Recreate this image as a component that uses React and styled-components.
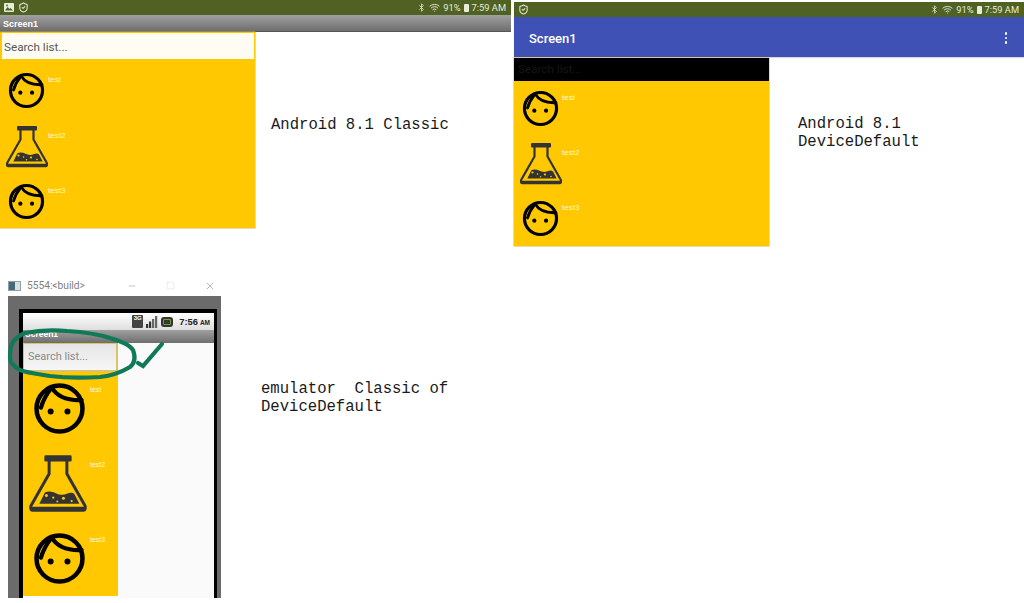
import React from 'react';
import styled, { createGlobalStyle } from 'styled-components';
import { Bluetooth, Wifi, ShieldCheck, Minus, Square, X } from 'lucide-react';

const GlobalStyle = createGlobalStyle`
  html, body { margin: 0; padding: 0; background: #fff; }
  body { font-family: Roboto, "Liberation Sans", sans-serif; overflow: hidden; }
`;

const Page = styled.div`
  width: 1024px;
  height: 603px;
  display: flex;
  flex-direction: column;
  overflow: hidden;
`;

const TopRow = styled.div`
  height: 278px;
  display: flex;
  gap: 3px;
`;

const BottomRow = styled.div`
  display: flex;
  padding-left: 8px;
`;

const Device = styled.section`
  display: flex;
  flex-direction: column;
  width: ${(p) => p.$width}px;
  margin-top: ${(p) => p.$top || 0}px;
`;

const StatusBar = styled.div`
  height: 15px;
  flex: none;
  background: #4f6223;
  color: #e8ecd8;
  display: flex;
  align-items: center;
  padding: 0 5px 0 4px;
  gap: 4px;
  font-size: 9.3px;
`;

const StatusRight = styled.div`
  margin-left: auto;
  display: flex;
  align-items: center;
  gap: 3px;
`;

const Battery = styled.span`
  width: 5px;
  height: 8px;
  background: #e8ecd8;
  border-radius: 1px;
`;

const ClassicTitle = styled.div`
  height: 17px;
  flex: none;
  box-sizing: border-box;
  background: linear-gradient(#a0a0a0, #6e6e6e);
  border-bottom: 1px solid #555;
  color: #fff;
  font: bold 9px/19px "Liberation Sans", sans-serif;
  padding-left: 3px;
`;

const ActionBar = styled.div`
  height: 40px;
  flex: none;
  background: #3f51b5;
  color: #fff;
  display: flex;
  align-items: center;
  justify-content: space-between;
  padding: 2px 17px 0 15px;
  box-sizing: border-box;
  font-size: 13px;
  font-weight: 500;
  box-shadow: 0 1px 1px #d8d8e4;
`;

const MenuDots = styled.span`
  display: flex;
  flex-direction: column;
  gap: 2px;
  i {
    width: 2.5px;
    height: 2.5px;
    border-radius: 50%;
    background: #fff;
  }
`;

const Content = styled.div`
  display: flex;
  align-items: flex-start;
`;

const ListColumn = styled.div`
  width: 255px;
  flex: none;
  background: #ffc800;
  box-shadow: 0 0 0 0.5px #d8b84a;
  margin-top: ${(p) => p.$top || 0}px;
  padding: ${(p) => p.$pad || '0'};
`;

const SearchBox = styled.div`
  height: 26px;
  margin: 0 1px 0 2px;
  background: #fffdf3;
  color: #555;
  font-size: 11.7px;
  line-height: 29px;
  padding-left: 2px;
`;

const DarkSearchBox = styled.div`
  height: 23px;
  background: #000;
  color: #161616;
  font-size: 11.7px;
  line-height: 23px;
  padding-left: 4px;
`;

const ListItem = styled.div`
  height: ${(p) => p.$height}px;
  box-sizing: border-box;
  position: relative;
  display: flex;
  align-items: flex-start;
  padding: ${(p) => p.$top}px 0 0 ${(p) => p.$pad}px;
`;

const ItemLabel = styled.span`
  position: absolute;
  left: ${(p) => p.$left}px;
  top: ${(p) => p.$top}px;
  color: #fff8d8;
  font: ${(p) => p.$size}px/9px "Liberation Sans", sans-serif;
`;

const Caption = styled.p`
  margin: ${(p) => p.$top}px 0 0 ${(p) => p.$left}px;
  font: 15.6px/18px "Liberation Mono", monospace;
  color: #1a1a1a;
  white-space: pre;
`;

const EmulatorWindow = styled.section`
  width: 213px;
  position: relative;
  flex: none;
`;

const WindowTitle = styled.div`
  height: 18px;
  display: flex;
  align-items: center;
  padding-bottom: 3px;
  box-sizing: border-box;
  color: #808080;
  font-size: 10.2px;
  gap: 6px;
`;

const WindowIcon = styled.span`
  width: 13px;
  height: 10px;
  box-sizing: border-box;
  border: 1px solid #8fa0aa;
  background: linear-gradient(90deg, #48697a 55%, #d8e0e4 55%);
`;

const WindowControls = styled.div`
  margin-left: auto;
  display: flex;
  align-items: center;
  gap: 29px;
  padding-right: 5px;
  color: #777;
`;

const EmulatorFrame = styled.div`
  background: #6b6b6b;
  padding: 13px 4px 0 11px;
  height: 302px;
  box-sizing: border-box;
`;

const Bezel = styled.div`
  background: #000;
  padding: 4px 3px 0 4px;
  height: 100%;
  box-sizing: border-box;
`;

const EmuScreen = styled.div`
  background: #fafafa;
  height: 100%;
  display: flex;
  flex-direction: column;
`;

const EmuStatus = styled.div`
  height: 17px;
  flex: none;
  background: linear-gradient(#fff, #dedede);
  display: flex;
  align-items: center;
  justify-content: flex-end;
  gap: 3px;
  padding-right: 4px;
  color: #222;
  font: bold 9.3px "Liberation Sans", sans-serif;
  small {
    font-size: 6.5px;
    margin-left: 2px;
  }
`;

const EmuClock = styled.span`
  margin-left: 3px;
`;

const NetworkChip = styled.span`
  width: 11px;
  height: 13px;
  background: #444;
  color: #fff;
  border-radius: 1px;
  font: bold 6px/7px "Liberation Sans", sans-serif;
  text-align: center;
`;

const EmuBattery = styled.span`
  width: 12px;
  height: 10px;
  background: #2e3a2a;
  border-radius: 3px;
  border: 2px solid #333;
  box-sizing: border-box;
  box-shadow: inset 0 0 0 1px #7c9a3a;
`;

const EmuTitle = styled.div`
  height: 13px;
  flex: none;
  background: linear-gradient(#a0a0a0, #6e6e6e);
  color: #fff;
  font: bold 8.5px/9px "Liberation Sans", sans-serif;
  padding-left: 2px;
`;

const EmuList = styled.div`
  width: 95px;
  height: 253px;
  background: #ffc800;
`;

const EmuSearch = styled.div`
  height: 29px;
  box-sizing: border-box;
  background: linear-gradient(#e6e6e6, #f6f6f6);
  border: 1px solid #dcc26a;
  border-width: 1px 2px 2px 1px;
  color: #8a8a8a;
  font-size: 11px;
  line-height: 26px;
  padding-left: 4px;
`;

const Annotation = styled.svg`
  position: absolute;
  left: 0;
  top: 50px;
  overflow: visible;
`;

const FaceIcon = ({ size }) => (
  <svg width={size} height={size} viewBox="0 0 24 24" fill="none" stroke="#000" strokeLinecap="round">
    <circle cx="12" cy="12" r="10.4" strokeWidth="2.05" />
    <path d="M8.5 2.5C10.5 6 15 8.5 22 8.2" strokeWidth="1.9" />
    <path d="M8.5 2.5C6.5 5 4.6 8 3.6 11.6" strokeWidth="1.9" />
    <circle cx="8" cy="13.4" r="1.35" fill="#000" stroke="none" />
    <circle cx="15.6" cy="13.4" r="1.35" fill="#000" stroke="none" />
  </svg>
);

const FlaskIcon = ({ size }) => (
  <svg width={size} height={size} viewBox="0 0 44 44" fill="none">
    <rect x="12" y="1" width="20" height="4.5" rx="1" fill="#333" />
    <path
      d="M15.5 5v9.5L2.4 37.5C1.4 39.5 2.2 40.5 3.8 40.5h36.4c1.6 0 2.4-1 1.4-3L28.5 14.5V5"
      stroke="#333"
      strokeWidth="2.2"
      strokeLinejoin="round"
    />
    <path d="M3 40.5h38" stroke="#333" strokeWidth="3.6" strokeLinecap="round" />
    <path d="M12.5 28c3-1 5.5-.5 8 .8s5.5 1.6 8 .4 4.5-.8 5.5.2l3.7 7.1H8.3z" fill="#333" />
    <circle cx="13.5" cy="30.5" r="1.1" fill="#ffc800" />
    <circle cx="18.5" cy="32" r="0.8" fill="#ffc800" />
    <circle cx="26" cy="32.5" r="1.1" fill="#ffc800" />
    <circle cx="21.5" cy="34.8" r="0.7" fill="#ffc800" />
    <circle cx="32" cy="34.5" r="0.8" fill="#ffc800" />
  </svg>
);

const StatusPicture = () => (
  <svg width="10" height="9" viewBox="0 0 10 9">
    <rect width="10" height="9" rx="1" fill="#e8ecd8" />
    <path d="M1 7.5 3.5 4l2 2 1-1 2.5 2.5z" fill="#4f6223" />
    <circle cx="3" cy="2.4" r="0.9" fill="#4f6223" />
  </svg>
);

const SignalBars = () => (
  <svg width="12" height="12" viewBox="0 0 12 12" fill="#333">
    <rect x="0" y="8" width="2.2" height="4" />
    <rect x="3" y="5.5" width="2.2" height="6.5" />
    <rect x="6" y="3" width="2.2" height="9" fill="#666" />
    <rect x="9" y="0" width="2.2" height="12" fill="#666" />
  </svg>
);

const items = [
  { name: 'test', kind: 'face' },
  { name: 'test2', kind: 'flask' },
  { name: 'test3', kind: 'face' },
];

const PhoneList = ({ height, faceTop, flaskTop, labelTop }) =>
  items.map((item) => (
    <ListItem
      key={item.name}
      $height={height}
      $top={item.kind === 'face' ? faceTop : flaskTop}
      $pad={item.kind === 'face' ? 8 : 5}
    >
      {item.kind === 'face' ? <FaceIcon size={37} /> : <FlaskIcon size={44} />}
      <ItemLabel $left={48} $top={labelTop} $size={8}>{item.name}</ItemLabel>
    </ListItem>
  ));

const EmuItems = () =>
  items.map((item) => (
    <ListItem
      key={item.name}
      $height={75}
      $top={item.kind === 'face' ? 9.5 : 7}
      $pad={item.kind === 'face' ? 10 : 5}
    >
      {item.kind === 'face' ? <FaceIcon size={53} /> : <FlaskIcon size={60} />}
      <ItemLabel $left={67} $top={13} $size={7}>{item.name}</ItemLabel>
    </ListItem>
  ));

const StatusIcons = () => (
  <StatusRight>
    <Bluetooth size={9} strokeWidth={2} />
    <Wifi size={11} strokeWidth={2} />
    <span>91%</span>
    <Battery />
    <span>7:59 AM</span>
  </StatusRight>
);

const App = () => (
  <Page>
    <GlobalStyle />
    <TopRow>
      <Device $width={511}>
        <StatusBar>
          <StatusPicture />
          <ShieldCheck size={11} strokeWidth={2.2} />
          <StatusIcons />
        </StatusBar>
        <ClassicTitle>Screen1</ClassicTitle>
        <Content>
          <ListColumn $pad="1px 0 2.5px">
            <SearchBox>Search list...</SearchBox>
            <PhoneList height={55.5} faceTop={13} flaskTop={10} labelTop={16} />
          </ListColumn>
          <Caption $top={84} $left={16}>Android 8.1 Classic</Caption>
        </Content>
      </Device>
      <Device $width={510} $top={2}>
        <StatusBar>
          <ShieldCheck size={11} strokeWidth={2.2} />
          <StatusIcons />
        </StatusBar>
        <ActionBar>
          Screen1
          <MenuDots><i /><i /><i /></MenuDots>
        </ActionBar>
        <Content>
          <ListColumn $top={1}>
            <DarkSearchBox>Search list...</DarkSearchBox>
            <PhoneList height={55} faceTop={8.5} flaskTop={6} labelTop={11.5} />
          </ListColumn>
          <Caption $top={58} $left={29}>{'Android 8.1\nDeviceDefault'}</Caption>
        </Content>
      </Device>
    </TopRow>
    <BottomRow>
      <EmulatorWindow>
        <WindowTitle>
          <WindowIcon />
          5554:&lt;build&gt;
          <WindowControls>
            <Minus size={10} strokeWidth={1} />
            <Square size={9} strokeWidth={1} color="#ccc" />
            <X size={12} strokeWidth={1} />
          </WindowControls>
        </WindowTitle>
        <EmulatorFrame>
          <Bezel>
            <EmuScreen>
              <EmuStatus>
                <NetworkChip>3G</NetworkChip>
                <SignalBars />
                <EmuBattery />
                <EmuClock>7:56<small>AM</small></EmuClock>
              </EmuStatus>
              <EmuTitle>Screen1</EmuTitle>
              <EmuList>
                <EmuSearch>Search list...</EmuSearch>
                <EmuItems />
              </EmuList>
            </EmuScreen>
          </Bezel>
        </EmulatorFrame>
        <Annotation width="160" height="55" viewBox="0 0 160 55" fill="none" stroke="#0f7a58" strokeWidth="4.2" strokeLinecap="round">
          <path d="M17 5C32 2 48 2 59 3C75 4 90 6 102 10C112 13 122 17 125 22C128 30 127 35 122 39C112 45 102 48 92 49C75 50 58 50 42 48C30 46 20 45 12 42C5 38 2 34 2 30C2 24 2 18 5 14C8 10 12 7 17 5" />
          <path d="M130 35L135 38L154 16" />
        </Annotation>
      </EmulatorWindow>
      <Caption $top={102} $left={40}>{'emulator  Classic of\nDeviceDefault'}</Caption>
    </BottomRow>
  </Page>
);

export default App;
